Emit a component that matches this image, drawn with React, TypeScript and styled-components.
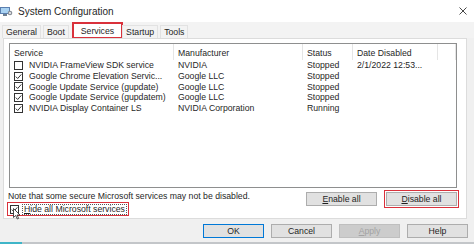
import React from 'react';
import styled, { createGlobalStyle } from 'styled-components';

const ink = '#1f1f1f';
const red = '#d9313b';
const dialog = '#f0f0f0';
const btnBorder = '#adadad';

const GlobalStyle = createGlobalStyle`
  html, body { margin: 0; padding: 0; }
  body {
    width: 474px;
    height: 244px;
    overflow: hidden;
    background: ${dialog};
    font-family: "Liberation Sans", Arial, sans-serif;
    font-size: 8.7px;
    color: ${ink};
  }
`;

const Window = styled.div`
  width: 474px;
  height: 244px;
  display: flex;
  flex-direction: column;
`;

const TitleBar = styled.div`
  height: 22px;
  display: flex;
  align-items: center;
  background: #fff;
  padding-right: 7px;
`;

const AppIcon = styled.svg`
  width: 13px;
  height: 11px;
  flex: none;
`;

const Title = styled.div`
  margin-left: 5px;
  font-size: 10px;
  flex: 1;
`;

const CloseIcon = styled.svg`
  width: 8px;
  height: 8px;
`;

const TabStrip = styled.div`
  height: 16px;
  display: flex;
  align-items: flex-end;
  padding-left: 2px;
  background: #f3f3f3;
`;

const Tab = styled.div<{ $active?: boolean }>`
  height: ${p => (p.$active ? 15 : 13)}px;
  display: flex;
  align-items: center;
  padding: 0 ${p => (p.$active ? 7 : 3)}px;
  margin-right: ${p => (p.$active ? 0 : 2)}px;
  margin-left: ${p => (p.$active ? 2 : 0)}px;
  background: ${p => (p.$active ? '#fff' : '#f3f3f3')};
  border: 1px solid ${p => (p.$active ? red : '#e2e2e2')};
  border-bottom: ${p => (p.$active ? `1px solid ${red}` : 'none')};
  box-sizing: border-box;
  ${p => (p.$active ? 'outline: 0.5px solid ' + red + ';' : '')}
`;

const TabPage = styled.div`
  flex: 1;
  margin: 0 7px 0 3px;
  background: #fff;
  border: 1px solid #dcdcdc;
  padding: 4px 9px 0 5px;
  display: flex;
  flex-direction: column;
`;

const ListBox = styled.div`
  height: 145px;
  border: 1px solid #8e8f8f;
  background: #fff;
  box-sizing: border-box;
`;

const cols = '164px 129px 50px 85px 1fr';

const HeaderRow = styled.div`
  display: grid;
  grid-template-columns: ${cols};
  height: 16px;
`;

const HeaderCell = styled.div`
  display: flex;
  align-items: center;
  padding: 2px 0 0 4px;
  border-right: 1px solid #e5e5e5;
  white-space: nowrap;
`;

const Row = styled.div`
  display: grid;
  grid-template-columns: ${cols};
  height: 10.7px;
  align-items: center;
  white-space: nowrap;
`;

const Cell = styled.div`
  padding-left: 4px;
  display: flex;
  align-items: center;
  overflow: hidden;
`;

const Box = styled.span`
  width: 9px;
  height: 9px;
  box-sizing: border-box;
  border: 1px solid #333;
  background: #fff;
  display: inline-flex;
  align-items: center;
  justify-content: center;
  margin-right: 6px;
  flex: none;
`;

const Check = ({ on }: { on: boolean }) => (
  <Box>
    {on && (
      <svg width="7" height="7" viewBox="0 0 7 7">
        <polyline points="0.8,3.6 2.7,5.5 6.3,1.4" fill="none" stroke="#333" strokeWidth="1" />
      </svg>
    )}
  </Box>
);

const Lower = styled.div`
  display: grid;
  grid-template-columns: 1fr auto;
  grid-template-rows: 13px 15px;
  margin-top: 1px;
`;

const Note = styled.div`
  grid-column: 1;
  grid-row: 1;
  padding: 2px 0 0 0;
  margin-left: -1px;
  white-space: nowrap;
`;

const HideBox = styled.div`
  grid-column: 1;
  grid-row: 2;
  position: relative;
  justify-self: start;
  margin-left: -2px;
  height: 14px;
  display: flex;
  align-items: center;
  padding: 0 1px 0 2px;
  border: 1.5px solid ${red};
  box-sizing: border-box;
`;

const HideLabel = styled.span`
  border: 1px dotted #555;
  padding: 0 1px;
  line-height: 9px;
  margin-left: -3px;
`;

const Cursor = styled.svg`
  position: absolute;
  left: 5px;
  top: 5px;
  width: 8px;
  height: 12px;
`;

const ActionButtons = styled.div`
  grid-column: 2;
  grid-row: 1 / span 2;
  display: flex;
  gap: 9px;
  padding-top: 3px;
  align-items: flex-start;
`;

const Button = styled.button<{ $w?: number; $default?: boolean; $marked?: boolean }>`
  width: ${p => p.$w ?? 61}px;
  height: 14px;
  padding: 0;
  font-family: inherit;
  font-size: 8.7px;
  color: ${ink};
  background: #e1e1e1;
  border: 1px solid ${p => (p.$default ? '#0078d7' : btnBorder)};
  box-sizing: border-box;
  ${p => (p.$marked ? `outline: 1.5px solid ${red}; outline-offset: 1px;` : '')}
  &:disabled {
    color: #a3a3a3;
    background: #cccccc;
    border-color: #bfbfbf;
  }
`;

const Footer = styled.div`
  height: 23px;
  display: flex;
  justify-content: flex-end;
  align-items: center;
  gap: 7px;
  padding: 0 6px 0 0;
`;

const BottomEdge = styled.div`
  height: 2px;
  background: linear-gradient(to right, #3fb5c8 0 22px, #c3c6c9 22px);
`;

const services = [
  { on: false, name: 'NVIDIA FrameView SDK service', maker: 'NVIDIA', status: 'Stopped', date: '2/1/2022 12:53...' },
  { on: true, name: 'Google Chrome Elevation Servic...', maker: 'Google LLC', status: 'Stopped', date: '' },
  { on: true, name: 'Google Update Service (gupdate)', maker: 'Google LLC', status: 'Stopped', date: '' },
  { on: true, name: 'Google Update Service (gupdatem)', maker: 'Google LLC', status: 'Stopped', date: '' },
  { on: true, name: 'NVIDIA Display Container LS', maker: 'NVIDIA Corporation', status: 'Running', date: '' },
];

export default function App() {
  return (
    <>
      <GlobalStyle />
      <Window>
        <TitleBar>
          <AppIcon viewBox="0 0 13 11">
            <rect x="0" y="1" width="10" height="7" fill="#5a7fb0" />
            <rect x="1" y="2" width="8" height="5" fill="#a9d2f2" />
            <rect x="3" y="8" width="4" height="2" fill="#6f7f90" />
            <circle cx="10" cy="7" r="2.3" fill="#8a9099" />
            <circle cx="10" cy="7" r="0.9" fill="#fff" />
          </AppIcon>
          <Title>System Configuration</Title>
          <CloseIcon viewBox="0 0 8 8">
            <path d="M0.5 0.5 L7.5 7.5 M7.5 0.5 L0.5 7.5" stroke="#333" strokeWidth="0.9" />
          </CloseIcon>
        </TitleBar>
        <TabStrip>
          <Tab>General</Tab>
          <Tab>Boot</Tab>
          <Tab $active>Services</Tab>
          <Tab>Startup</Tab>
          <Tab>Tools</Tab>
        </TabStrip>
        <TabPage>
          <ListBox>
            <HeaderRow>
              <HeaderCell>Service</HeaderCell>
              <HeaderCell>Manufacturer</HeaderCell>
              <HeaderCell>Status</HeaderCell>
              <HeaderCell>Date Disabled</HeaderCell>
              <HeaderCell />
            </HeaderRow>
            {services.map(s => (
              <Row key={s.name}>
                <Cell>
                  <Check on={s.on} />
                  {s.name}
                </Cell>
                <Cell>{s.maker}</Cell>
                <Cell>{s.status}</Cell>
                <Cell>{s.date}</Cell>
                <Cell />
              </Row>
            ))}
          </ListBox>
          <Lower>
            <Note>Note that some secure Microsoft services may not be disabled.</Note>
            <HideBox>
              <Check on />
              <HideLabel>
                <u>H</u>ide all Microsoft services
              </HideLabel>
              <Cursor viewBox="0 0 8 12">
                <path d="M0.5 0.5 L0.5 9.5 L2.7 7.5 L4.3 11 L5.6 10.4 L4.1 7 L7 7 Z" fill="#fff" stroke="#222" strokeWidth="0.8" />
              </Cursor>
            </HideBox>
            <ActionButtons>
              <Button $w={71}>
                <u>E</u>nable all
              </Button>
              <Button $w={71} $marked>
                <u>D</u>isable all
              </Button>
            </ActionButtons>
          </Lower>
        </TabPage>
        <Footer>
          <Button $default>OK</Button>
          <Button>Cancel</Button>
          <Button disabled>
            <u>A</u>pply
          </Button>
          <Button>Help</Button>
        </Footer>
        <BottomEdge />
      </Window>
    </>
  );
}
